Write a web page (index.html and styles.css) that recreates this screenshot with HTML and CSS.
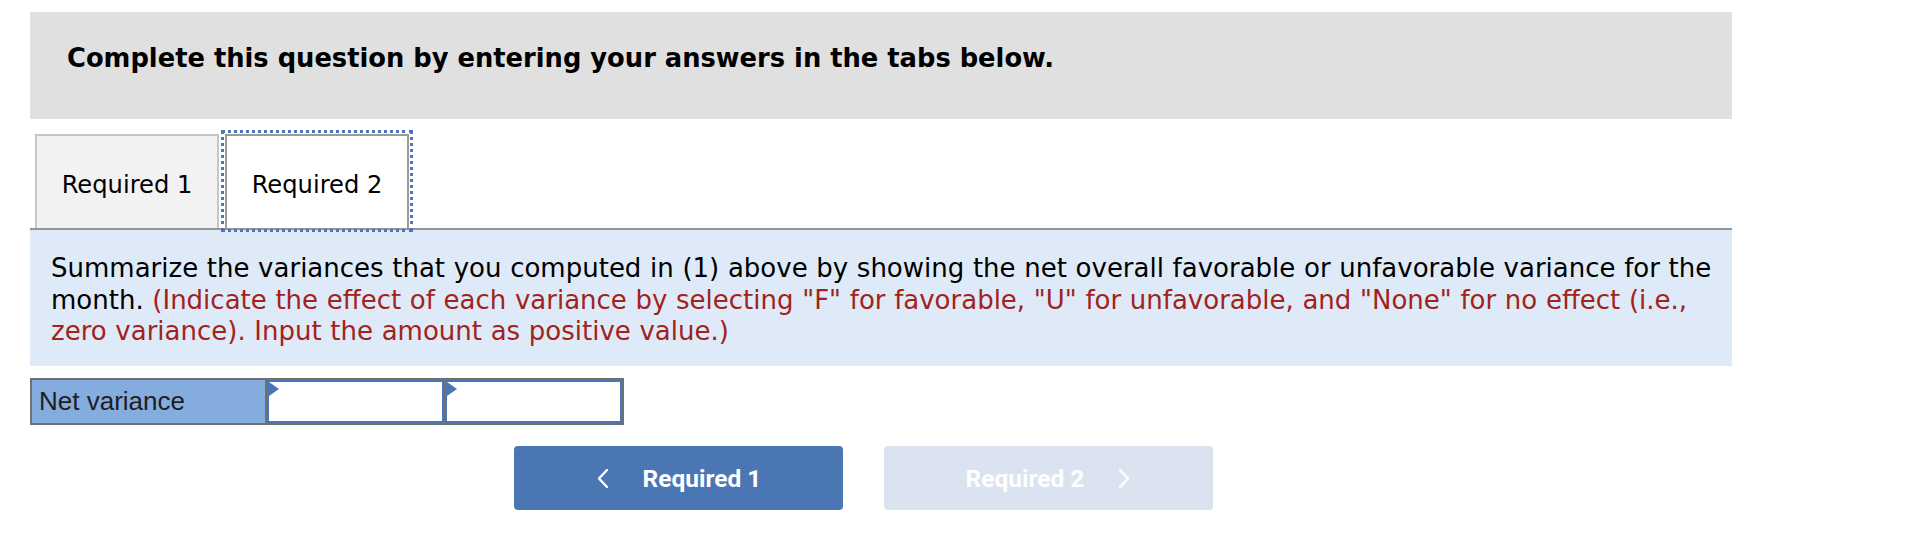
FILE: index.html
```html
<!DOCTYPE html>
<html lang="en">
<head>
<meta charset="utf-8">
<title>Complete this question</title>
<link rel="stylesheet" href="styles.css">
</head>
<body>
<div class="page">
  <div class="header">Complete this question by entering your answers in the tabs below.</div>

  <div class="tabs">
    <div class="tab">Required 1</div>
    <div class="tab active">Required 2</div>
  </div>

  <div class="panel">
    Summarize the variances that you computed in (1) above by showing the net overall favorable or unfavorable variance for the month. <span class="red">(Indicate the effect of each variance by selecting "F" for favorable, "U" for unfavorable, and "None" for no effect (i.e., zero variance). Input the amount as positive value.)</span>
  </div>

  <div class="nv-table">
    <div class="nv-label">Net variance</div>
    <div class="nv-input"><span class="flag"></span></div>
    <div class="nv-input second"><span class="flag"></span></div>
  </div>

  <div class="nav">
    <div class="btn prev">
      <svg width="14" height="21" viewBox="0 0 14 21"><polyline points="11,2 3,10.5 11,19" fill="none" stroke="#fff" stroke-width="2.4" stroke-linecap="round" stroke-linejoin="round"/></svg>
      <span>Required 1</span>
    </div>
    <div class="btn next">
      <span>Required 2</span>
      <svg width="14" height="21" viewBox="0 0 14 21"><polyline points="3,2 11,10.5 3,19" fill="none" stroke="#fff" stroke-width="2.4" stroke-linecap="round" stroke-linejoin="round"/></svg>
    </div>
  </div>
</div>
</body>
</html>
```

FILE: styles.css
```css
html, body {
  margin: 0;
  padding: 0;
  background: #ffffff;
}

.page {
  width: 1702px;
  margin-left: 30px;
  padding-top: 12px;
  font-family: "DejaVu Sans", Verdana, sans-serif;
}

.header {
  height: 107px;
  box-sizing: border-box;
  background: #e0e0e0;
  padding: 31px 0 0 37px;
  font-weight: bold;
  font-size: 25.75px;
  line-height: 30px;
  color: #000;
}

.tabs {
  display: flex;
  gap: 6px;
  padding-left: 5px;
  margin-top: 15px;
  border-bottom: 2px solid #959595;
}

.tab {
  width: 184px;
  height: 94px;
  box-sizing: border-box;
  display: flex;
  align-items: center;
  justify-content: center;
  padding-top: 5px;
  font-size: 24.2px;
  color: #000;
  background: #f2f2f2;
  border: 2px solid #c6c6c6;
  border-bottom: none;
}

.tab.active {
  background: #ffffff;
  border-color: #9a9a9a;
  outline: 3px dotted #4a75c2;
  outline-offset: 1px;
  position: relative;
  z-index: 1;
}

.panel {
  background: #deeaf7;
  padding: 23px 10px 18px 21px;
  font-size: 26px;
  line-height: 31.7px;
  color: #000;
  word-spacing: 0.4px;
}

.red {
  color: #a2221c;
}

.nv-table {
  display: flex;
  width: 594px;
  height: 47px;
  box-sizing: border-box;
  margin-top: 12px;
  border: 2px solid #707070;
  background: #707070;
}

.nv-label {
  width: 233px;
  background: #84acdf;
  font-family: "Liberation Sans", Arial, sans-serif;
  font-size: 26px;
  color: #1e1e1e;
  display: flex;
  align-items: center;
  padding-left: 7px;
  box-sizing: border-box;
  margin-right: 2px;
}

.nv-input {
  position: relative;
  width: 178px;
  background: #fff;
  border: 2px solid #4a76b5;
  box-sizing: border-box;
}

.nv-input.second {
  width: 177px;
  margin-left: 1px;
}

.flag {
  position: absolute;
  left: 0;
  top: 0;
  width: 0;
  height: 0;
  border-top: 7px solid transparent;
  border-bottom: 7px solid transparent;
  border-left: 10px solid #4a76b5;
}

.nav {
  display: flex;
  gap: 41px;
  padding-left: 484px;
  margin-top: 21px;
}

.btn {
  width: 329px;
  height: 64px;
  border-radius: 4px;
  display: flex;
  align-items: center;
  justify-content: center;
  gap: 33px;
  font-family: Roboto, "Liberation Sans", sans-serif;
  font-weight: bold;
  font-size: 24.5px;
  color: #ffffff;
}

.btn.prev {
  background: #4a76b4;
}

.btn.next {
  background: #dae3ef;
}
```
